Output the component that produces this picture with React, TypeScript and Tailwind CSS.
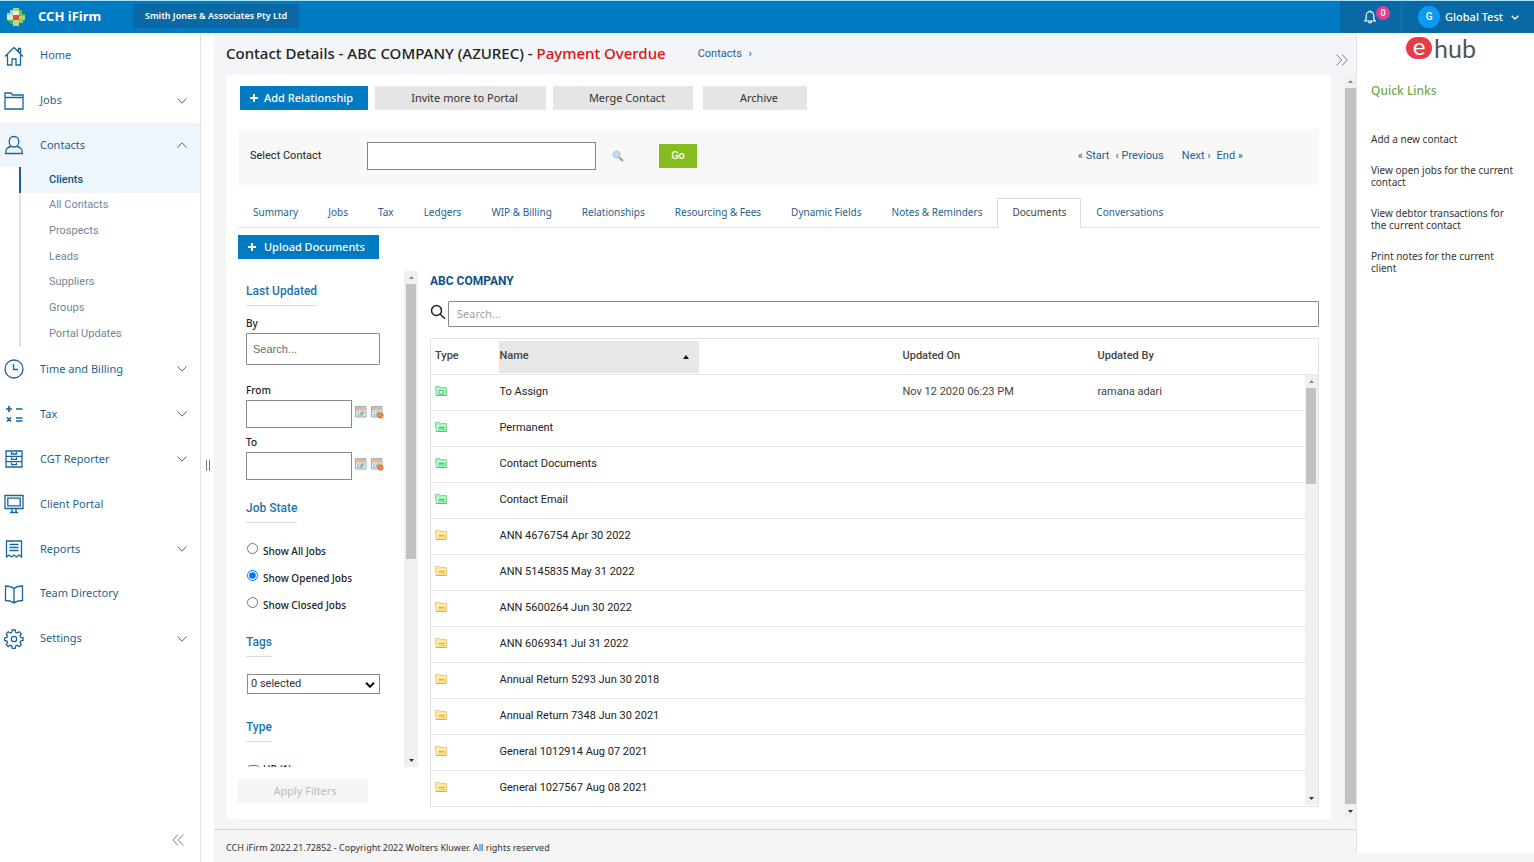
import { useState, type ReactNode } from 'react';
import clsx from 'clsx';

interface NavItem {
  label: string;
  icon: ReactNode;
  expandable?: boolean;
}

const topNav: NavItem[] = [
  {
    label: 'Home',
    icon: (
      <path d="M1 10.5 10 1.5l9 9M3.5 9v10h4.5v-6h4v6h4.500V9M14.500 5.500V2.500h2v5" />
    ),
  },
  {
    label: 'Jobs',
    icon: <path d="M1 18V2h6l1.500 2H19v14zM1 6.500h18" />,
    expandable: true,
  },
];

const contactsIcon = (
  <path d="M10 1.500c3 0 4.800 2.200 4.800 5S13 12 10 12s-4.800-2.700-4.800-5.500 1.800-5 4.800-5zM7 11.500c-3.500.7-5 2-5.500 7h17c-.5-5-2-6.300-5.500-7" />
);

const bottomNav: NavItem[] = [
  {
    label: 'Time and Billing',
    icon: (
      <>
        <circle cx="10" cy="10" r="9" />
        <path d="M9.500 5v5.500H14" />
      </>
    ),
    expandable: true,
  },
  {
    label: 'Tax',
    icon: (
      <path
        strokeWidth="1.700"
        d="M2 5h6M5 2v6M12 5h6.500M3 13.500l4 4M7 13.500l-4 4M12 14h6.500M12 17h6.500"
      />
    ),
    expandable: true,
  },
  {
    label: 'CGT Reporter',
    icon: (
      <path d="M2 2h16v16H2zM2 7.300h16M2 12.700h16M7.500 3v2h5V3M7.500 8.300v2h5v-2M7.500 13.700v2h5v-2" />
    ),
    expandable: true,
  },
  {
    label: 'Client Portal',
    icon: <path d="M1 1.500h18v13H1zM3.800 4.200h12.400v7.600H3.800zM8 15v3.500M12 15v3.500M6 18.500h8" />,
  },
  {
    label: 'Reports',
    icon: (
      <path d="M2.500 2h15v16l-2.500-2-2.500 2-2.500-2-2.500 2L5 16l-2.500 2zM5.500 5.500h9M5.500 8.500h9M5.500 11.500h9" />
    ),
    expandable: true,
  },
  {
    label: 'Team Directory',
    icon: (
      <path d="M10 4.500C7.500 2.500 4.500 2 1.500 2v14.500c3 0 6 .5 8.500 2.500 2.500-2 5.500-2.500 8.500-2.500V2c-3 0-6 .5-8.500 2.500zM10 4.500V18.500" />
    ),
  },
  {
    label: 'Settings',
    icon: (
      <>
        <circle cx="10" cy="10" r="2.700" />
        <path d="m8.300 1-.5 2.400-1.500.7-2.100-1.300-2 2 1.300 2.100-.6 1.500-2.400.5v2.600l2.400.5.6 1.500-1.300 2.100 2 2 2.100-1.300 1.500.7.5 2.400h2.900l.5-2.400 1.500-.7 2.100 1.300 2-2-1.300-2.100.7-1.500 2.400-.5V8.900l-2.400-.5-.7-1.500 1.300-2.100-2-2-2.100 1.300-1.500-.7-.5-2.400z" />
      </>
    ),
    expandable: true,
  },
];

const contactLinks = [
  'Clients',
  'All Contacts',
  'Prospects',
  'Leads',
  'Suppliers',
  'Groups',
  'Portal Updates',
];

const tabs = [
  'Summary',
  'Jobs',
  'Tax',
  'Ledgers',
  'WIP & Billing',
  'Relationships',
  'Resourcing & Fees',
  'Dynamic Fields',
  'Notes & Reminders',
  'Documents',
  'Conversations',
];

const folders = [
  { name: 'To Assign', on: 'Nov 12 2020 06:23 PM', by: 'ramana adari', system: true },
  { name: 'Permanent', system: true },
  { name: 'Contact Documents', system: true },
  { name: 'Contact Email', system: true },
  { name: 'ANN 4676754 Apr 30 2022' },
  { name: 'ANN 5145835 May 31 2022' },
  { name: 'ANN 5600264 Jun 30 2022' },
  { name: 'ANN 6069341 Jul 31 2022' },
  { name: 'Annual Return 5293 Jun 30 2018' },
  { name: 'Annual Return 7348 Jun 30 2021' },
  { name: 'General 1012914 Aug 07 2021' },
  { name: 'General 1027567 Aug 08 2021' },
];

const quickLinks = [
  'Add a new contact',
  'View open jobs for the current contact',
  'View debtor transactions for the current contact',
  'Print notes for the current client',
];

const Chevron = ({ up }: { up?: boolean }) => (
  <svg viewBox="0 0 10 6" className="w-[10px] h-[6px] fill-none stroke-[#4f6475]">
    <path d={up ? 'M.5 5.500 5 .8l4.500 4.700' : 'M.5.5 5 5.200 9.500.5'} />
  </svg>
);

const DoubleChevron = ({ left }: { left?: boolean }) => (
  <svg viewBox="0 0 12 12" className="w-3 h-3 fill-none stroke-[#7b7f84]">
    <path d={left ? 'M6 .5.8 6 6 11.500M11.500.5 6.300 6l5.200 5.500' : 'M.5.5 5.700 6 .5 11.500M6 .5 11.200 6 6 11.500'} />
  </svg>
);

const Plus = () => (
  <svg viewBox="0 0 8 8" className="w-2 h-2 stroke-white">
    <path d="M0 4h8M4 0v8" strokeWidth="2" />
  </svg>
);

const Arrow = ({ up }: { up?: boolean }) => (
  <svg viewBox="0 0 5 3" className={clsx('w-[5px] h-[3px]', up ? 'fill-[#888]' : 'fill-[#333]')}>
    <path d={up ? 'M0 3h5L2.500 0z' : 'M0 0h5L2.500 3z'} />
  </svg>
);

interface ScrollbarProps {
  thumb: string;
  className?: string;
}

const Scrollbar = ({ thumb, className }: ScrollbarProps) => (
  <div aria-hidden="true" className={clsx('flex flex-col items-center bg-[#f0f0f0]', className)}>
    <span className="h-[13px] shrink-0 flex items-center">
      <Arrow up />
    </span>
    <span className={clsx('bg-[#c1c1c1]', thumb)} />
    <span className="h-[14px] shrink-0 mt-auto flex items-center">
      <Arrow />
    </span>
  </div>
);

const FolderIcon = ({ system, assign }: { system?: boolean; assign?: boolean }) => (
  <svg
    viewBox="0 0 12 10"
    className="w-3 h-[10px]"
    fill={system ? '#a6efbb' : '#fbe7a0'}
    stroke={system ? '#7fdc9e' : '#e6c979'}
  >
    <path d="M.5 2V.5h4L5.500 1.500h6v8h-10z" />
    <path d="M2.500 9v-5.500h8.500" fill="none" stroke={system ? '#d8fbe2' : '#fff4c9'} />
    {assign ? (
      <path d="M4 8V4.500h4V8z" fill="#fff" stroke="#4fb877" />
    ) : (
      <path d="M3.500 4.500H10v3.500H3.500z" fill={system ? '#7fe69d' : '#f6d273'} stroke="none" />
    )}
    <path d="M1 9.500h10.500" stroke={system ? '#53c57b' : '#d9aa48'} />
    {!assign && <path d="M4 5.500h5" stroke={system ? '#4ccf7c' : '#e5b450'} />}
  </svg>
);

const CalendarIcon = ({ clear }: { clear?: boolean }) => (
  <svg viewBox="0 0 13 13" className="w-[13px] h-[13px]">
    <path d="M.5.5h10.500v10.500H.5z" fill="#dfe9f2" stroke="#93afca" />
    <path d="M1 1h9.500v3.500H1z" fill="#f1b488" />
    <path d="M2 5.500h2V7H2zM5 5.500h2V7H5zM2 8h2v1.500H2z" fill="#a9c0d6" />
    <path d="M4.500 7.500H8v2H4.500zM7 5.500h2v2H7z" fill="#79b78b" />
    {clear && <circle cx="9.500" cy="9.500" r="3" fill="#e5772e" />}
    {clear && <path d="m8.300 8.300 2.400 2.400" stroke="#f8cfae" />}
  </svg>
);

const Logo = () => (
  <svg viewBox="0 0 20 20" className="w-5 h-5">
    <path d="M7 1h6v3H7z" fill="#a9d68a" />
    <path d="M4 3h4v5H1V6h3z" fill="#a5d3dd" />
    <path d="M12 3h4v4h3v3h-7z" fill="#7ac043" />
    <path d="M1 8h6v5H1z" fill="#d5ebc0" />
    <path d="M13 9h6v4h-6z" fill="#a6d77c" />
    <path d="M2 13h6v4H4v-2H2z" fill="#5fae3a" />
    <path d="M12 12h5v4h-5z" fill="#8ccf4d" />
    <path d="M7 13h6v6H7z" fill="#b2da86" />
    <path d="M7 4h6v4H7z" fill="#e6f1da" />
    <path d="M7 8h6v5H7z" fill="#e2483c" />
  </svg>
);

const NavButton = ({ item, active }: { item: NavItem; active?: boolean }) => (
  <button
    className={clsx(
      'w-full flex items-center pl-1 pr-[13px] text-left text-[#1f5f8f]',
      active ? 'h-11 bg-[#eff6fb]' : 'h-[45px]'
    )}
  >
    <svg
      viewBox="0 0 20 20"
      className="w-5 h-5 mr-4 fill-none stroke-[#17659c]"
      strokeWidth="1.300"
    >
      {item.icon}
    </svg>
    <span className="flex-1">{item.label}</span>
    {item.expandable && <Chevron up={active} />}
  </button>
);

const FilterHeading = ({ children }: { children: ReactNode }) => (
  <h3 className="w-fit leading-5 pb-1 border-b border-[#ddd] font-['Roboto',sans-serif] text-[12px] font-medium text-[#1c75b0]">
    {children}
  </h3>
);

const DateField = ({ label, id }: { label: string; id: string }) => (
  <div>
    <label htmlFor={id} className="block leading-4 mb-[2px]">
      {label}
    </label>
    <div className="flex items-center gap-[3px]">
      <input id={id} className="w-[106px] h-7 border border-[#8a8a8a] bg-white" />
      <button aria-label={`Pick ${label} date`} className="pb-1">
        <CalendarIcon />
      </button>
      <button aria-label={`Clear ${label} date`} className="pb-1">
        <CalendarIcon clear />
      </button>
    </div>
  </div>
);

const Header = () => (
  <header className="h-[33px] flex items-center bg-[#007ac3] border-t border-[#a8e3f5] text-white font-medium">
    <div className="pl-[6px] w-[133px] flex items-center gap-3">
      <Logo />
      <span className="font-['Noto_Sans',sans-serif] text-[13px] font-bold">CCH iFirm</span>
    </div>
    <span className="h-6 px-3 mb-[2px] flex items-center rounded-sm bg-[#0a69a5] font-['Noto_Sans',sans-serif] text-[9px] font-semibold">
      Smith Jones &amp; Associates Pty Ltd
    </span>
    <div className="ml-auto h-full flex bg-[#0a69a5]">
      <button aria-label="Notifications" className="relative w-[62px] border-r border-[#1577b3]">
        <svg
          viewBox="0 0 12 14"
          className="w-3 h-[14px] ml-6 fill-none stroke-white"
          strokeWidth="1.200"
        >
          <path d="M.8 11h10.400L9.800 9V5.500a3.800 3.800 0 0 0-7.600 0V9zM4.500 11.500c.3 1.800 2.700 1.800 3 0M6 .5v1.200" />
        </svg>
        <span className="absolute top-[5px] left-9 w-[14px] h-[14px] rounded-full bg-[#e0408f] text-[9px] leading-[14px]">
          0
        </span>
      </button>
      <button className="pl-4 pr-[15px] flex items-center">
        <span className="w-[22px] h-[22px] mr-[5px] rounded-full bg-[#0b9bf5] text-[10px] leading-[22px]">
          G
        </span>
        <span className="mr-2 font-['Noto_Sans',sans-serif] text-[11px]">Global Test</span>
        <svg viewBox="0 0 8 5" className="w-2 h-[5px] fill-none stroke-white" strokeWidth="1.300">
          <path d="M.7.7 4 4 7.300.7" />
        </svg>
      </button>
    </div>
  </header>
);

const Sidebar = () => (
  <nav className="w-[201px] shrink-0 flex flex-col border-r border-[#dfe3e6] bg-white font-['Noto_Sans',sans-serif]">
    {topNav.map((item) => (
      <NavButton key={item.label} item={item} />
    ))}
    <NavButton item={{ label: 'Contacts', icon: contactsIcon, expandable: true }} active />
    <ul className="h-[180px] flex flex-col font-['Roboto',sans-serif]">
      {contactLinks.map((label, i) => (
        <li key={label} className="flex-1 flex pl-[19px]">
          <a
            href="#"
            className={clsx(
              'flex-1 flex items-center border-l-2 pl-7',
              i === 0
                ? 'border-[#1b5f8e] bg-[#eff6fb] font-medium text-[#0f5183]'
                : 'border-[#e3e3e3] text-[#6f879a]'
            )}
          >
            {label}
          </a>
        </li>
      ))}
    </ul>
    <div className="h-[314px] flex flex-col">
      {bottomNav.map((item) => (
        <NavButton key={item.label} item={item} />
      ))}
    </div>
    <button aria-label="Collapse menu" className="mt-auto mb-4 ml-auto mr-4">
      <DoubleChevron left />
    </button>
  </nav>
);

const Filters = () => {
  const [jobState, setJobState] = useState('Opened');

  return (
    <aside className="w-[180px] shrink-0 font-['Noto_Sans',sans-serif]">
      <div className="h-[496px] flex overflow-hidden text-[10px] font-medium">
        <div className="flex-1 pl-2 pt-[10px]">
          <FilterHeading>Last Updated</FilterHeading>
          <label htmlFor="by" className="block mt-[9px] mb-[2px] leading-4">
            By
          </label>
          <input
            id="by"
            placeholder="Search..."
            className="w-[134px] h-8 px-[6px] mb-[17px] border border-[#8a8a8a] rounded-[1px] font-['Liberation_Sans',sans-serif] text-[11px] font-normal placeholder:text-[#6b6b6b]"
          />
          <div className="flex flex-col gap-[6px]">
            <DateField label="From" id="from" />
            <DateField label="To" id="to" />
          </div>
          <div className="mt-[18px]">
            <FilterHeading>Job State</FilterHeading>
          </div>
          <div className="mt-[15px]">
            {['All', 'Opened', 'Closed'].map((state) => (
              <label key={state} className="h-[27px] flex items-center gap-[5px]">
                <input
                  type="radio"
                  name="job-state"
                  checked={jobState === state}
                  onChange={() => setJobState(state)}
                  className="w-[11px] h-[11px] ml-px mb-[6px]"
                />
                Show {state} Jobs
              </label>
            ))}
          </div>
          <div className="mt-[13px]">
            <FilterHeading>
              <label htmlFor="tags">Tags</label>
            </FilterHeading>
          </div>
          <div className="relative w-[133px] mt-[17px] ml-px">
            <select
              id="tags"
              className="block w-full h-5 pl-[3px] appearance-none border border-[#8a8a8a] bg-white font-['Roboto',sans-serif] text-[11px] font-normal text-[#333]"
            >
              <option>0 selected</option>
            </select>
            <svg
              viewBox="0 0 10 6"
              className="absolute right-[5px] top-2 w-[10px] h-[6px] fill-none stroke-[#111] pointer-events-none"
              strokeWidth="2"
            >
              <path d="m1 .8 4 4 4-4" />
            </svg>
          </div>
          <div className="mt-[23px]">
            <FilterHeading>Type</FilterHeading>
          </div>
          <label className="mt-[21px] ml-[2px] flex items-start gap-1 leading-3">
            <input type="checkbox" className="w-[11px] h-[11px] mt-[2px]" />
            HR (1)
          </label>
        </div>
        <Scrollbar className="w-[14px]" thumb="w-[10px] h-[275px]" />
      </div>
      <button
        disabled
        className="w-[130px] h-6 mt-3 pl-1 bg-[#f5f5f5] text-[#bcbcbc]"
      >
        Apply Filters
      </button>
    </aside>
  );
};

const FolderTable = () => (
  <table className="w-full mt-[11px] table-fixed border border-[#e2e2e2] text-left text-[#444]">
    <colgroup>
      <col className="w-[65px]" />
      <col />
      <col className="w-[195px]" />
      <col className="w-[211px]" />
      <col className="w-[14px]" />
    </colgroup>
    <thead>
      <tr className="h-9 border-b border-[#e6e6e6]">
        <th className="pl-1 font-medium">Type</th>
        <th className="pl-[3px] font-medium">
          <button className="w-[200px] h-8 pl-px pr-[10px] flex items-center justify-between bg-[#e7e7e7]">
            Name
            <svg viewBox="0 0 6 4" className="w-[6px] h-1 fill-[#111]">
              <path d="M0 4h6L3 0z" />
            </svg>
          </button>
        </th>
        <th className="pl-1 font-medium">Updated On</th>
        <th className="pl-1 font-medium">Updated By</th>
        <th />
      </tr>
    </thead>
    <tbody>
      {folders.map((folder, i) => (
        <tr key={folder.name} className="h-9">
          <td className="pl-1 pb-[3px] border-b border-[#e6e6e6]">
            <FolderIcon system={folder.system} assign={i === 0} />
          </td>
          <td className="pl-1 border-b border-[#e6e6e6] text-[#222]">{folder.name}</td>
          <td className="pl-1 border-b border-[#e6e6e6]">{folder.on}</td>
          <td className="pl-1 border-b border-[#e6e6e6]">{folder.by}</td>
          {i === 0 && (
            <td rowSpan={folders.length} className="p-0 align-top">
              <Scrollbar className="h-[430px]" thumb="w-[10px] h-[96px]" />
            </td>
          )}
        </tr>
      ))}
    </tbody>
  </table>
);

const Documents = () => (
  <section className="flex-1 min-w-0">
    <h2 className="leading-5 text-[12px] font-bold text-[#0f5183]">ABC COMPANY</h2>
    <div className="mt-[10px] flex items-center gap-[2px]">
      <svg
        viewBox="0 0 16 16"
        className="w-4 h-4 shrink-0 mb-1 fill-none stroke-[#222]"
        strokeWidth="1.500"
      >
        <circle cx="6.500" cy="6.500" r="5" />
        <path d="m10.200 10.200 4.800 4.500" />
      </svg>
      <input
        aria-label="Search documents"
        placeholder="Search..."
        className="flex-1 h-[26px] px-2 pb-[2px] border border-[#8a8a8a] rounded-[1px] font-['Noto_Sans',sans-serif] placeholder:text-[#a0a0a0]"
      />
    </div>
    <FolderTable />
  </section>
);

const ContactPanel = () => (
  <div className="flex-1 min-w-0 px-3 pt-[11px] pb-3 bg-white">
    <div className="pl-[2px] flex gap-[7px] font-['Noto_Sans',sans-serif] text-[#333]">
      <button className="w-32 h-6 pl-[10px] flex items-center gap-[6px] bg-[#007ac3] font-medium text-white">
        <Plus />
        Add Relationship
      </button>
      <button className="w-[171px] h-6 pl-2 bg-[#e5e5e5]">Invite more to Portal</button>
      <button className="w-[140px] h-6 pl-2 bg-[#e5e5e5]">Merge Contact</button>
      <button className="w-[104px] h-6 ml-[3px] pl-2 bg-[#e5e5e5]">Archive</button>
    </div>

    <div className="h-14 mt-[19px] px-3 pb-[2px] flex items-center bg-[#f8f8f8]">
      <label htmlFor="contact" className="w-[117px]">
        Select Contact
      </label>
      <input id="contact" className="w-[229px] h-7 border border-[#858585] bg-white" />
      <button aria-label="Find contact" className="ml-4">
        <svg viewBox="0 0 12 12" className="w-3 h-3 fill-none">
          <path d="m7 7 4 4" stroke="#c98f5c" strokeWidth="2" />
          <circle cx="4.500" cy="4.500" r="3.500" fill="#c3dcf3" stroke="#a9c4de" />
        </svg>
      </button>
      <button className="w-[38px] h-6 ml-[35px] bg-[#85bc20] font-medium text-white">Go</button>
      <div className="ml-auto mr-16 flex gap-[6px] text-[#1f5f8f]">
        <a href="#">« Start</a>
        <a href="#" className="mr-3">
          ‹ Previous
        </a>
        <a href="#">Next ›</a>
        <a href="#">End »</a>
      </div>
    </div>

    <div
      role="tablist"
      className="mt-[13px] flex border-b border-[#e0e0e0] font-['Noto_Sans',sans-serif] text-[10px]"
    >
      {tabs.map((tab) => (
        <button
          key={tab}
          role="tab"
          aria-selected={tab === 'Documents'}
          className={clsx(
            'px-[14px] pb-[2px] -mb-px border border-b-0',
            tab === 'Documents'
              ? 'h-[30px] border-[#ddd] bg-white text-[#444]'
              : 'h-[29px] border-transparent text-[#1f5f8f]'
          )}
        >
          {tab}
        </button>
      ))}
    </div>

    <button className="w-[141px] h-6 mt-[7px] pl-[10px] flex items-center gap-2 bg-[#007ac3] font-['Noto_Sans',sans-serif] font-medium text-white">
      <Plus />
      Upload Documents
    </button>

    <div className="mt-3 flex gap-3">
      <Filters />
      <Documents />
    </div>
  </div>
);

const QuickLinks = () => (
  <aside className="w-[178px] shrink-0 mb-2 border-l border-[#e3e5e8] bg-white font-['Noto_Sans',sans-serif]">
    <div className="pl-[49px] pt-1 flex items-center">
      <span className="w-[26px] h-[22px] rounded-full bg-[#e63c46] text-center font-['Lato',sans-serif] text-[24px] leading-[17px] text-white">
        e
      </span>
      <span className="ml-[2px] font-['Lato',sans-serif] text-[25px] leading-[22px] text-[#555]">
        hub
      </span>
    </div>
    <h2 className="mt-[22px] pl-[14px] leading-5 text-[12px] font-medium text-[#74a84f]">
      Quick Links
    </h2>
    <ul className="mt-8 pl-[14px] pr-4 flex flex-col gap-[19px] text-[10px] leading-3 text-[#333]">
      {quickLinks.map((label) => (
        <li key={label}>
          <a href="#" className="block">
            {label}
          </a>
        </li>
      ))}
    </ul>
  </aside>
);

const App = () => {
  return (
    <div className="min-h-screen flex flex-col bg-[#f5f5f5] font-['Roboto','Noto_Sans',sans-serif] text-[11px] text-[#222]">
      <Header />
      <div className="flex-1 flex">
        <Sidebar />
        <div className="w-[13px] shrink-0 flex items-center justify-center pt-9 bg-white">
          <span className="w-1 h-[11px] border-x border-[#777]" />
        </div>
        <main className="flex-1 min-w-0 flex flex-col bg-[#f3f5f8]">
          <div className="h-[42px] pl-3 pr-2 flex items-center">
            <h1 className="pb-[2px] font-['Noto_Sans',sans-serif] text-[15px] font-medium">
              Contact Details - ABC COMPANY (AZUREC) -{' '}
              <span className="text-[#e01010]">Payment Overdue</span>
            </h1>
            <a href="#" className="ml-8 text-[#1f5f8f]">
              Contacts <span className="ml-1">›</span>
            </a>
            <button aria-label="Hide quick links" className="ml-auto mt-3">
              <DoubleChevron />
            </button>
          </div>
          <div className="flex-1 pl-3 pb-[10px] flex items-stretch">
            <ContactPanel />
            <Scrollbar className="w-3 ml-[13px] mb-px" thumb="w-[11px] flex-1" />
          </div>
          <footer className="h-[33px] pl-3 pt-1 flex items-center border-t border-[#d5d8e0] bg-[#f5f5f5] font-['Noto_Sans',sans-serif] text-[9px] text-[#333]">
            CCH iFirm 2022.21.72852 - Copyright 2022 Wolters Kluwer. All rights reserved
          </footer>
        </main>
        <QuickLinks />
      </div>
    </div>
  );
};

export default App;
